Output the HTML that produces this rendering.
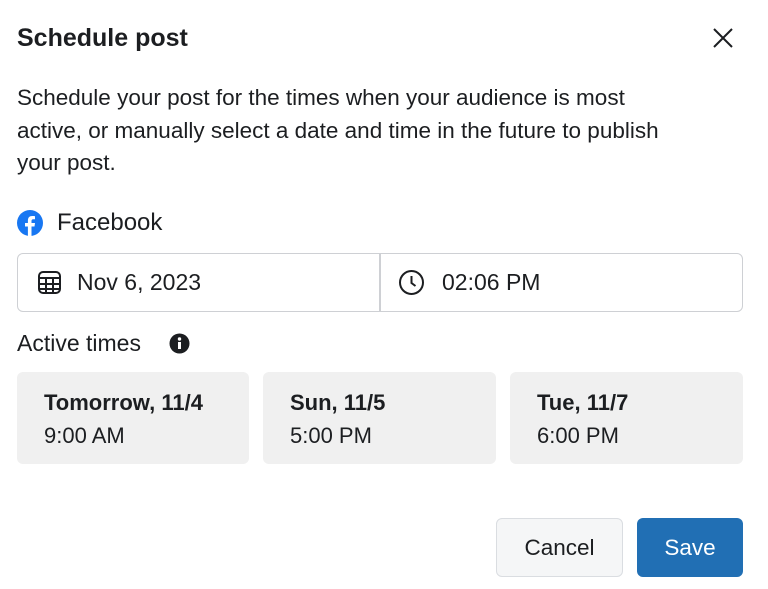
<!DOCTYPE html><html><head><style>
body{margin:0;width:768px;height:589px;background:#fff;font-family:"Liberation Sans",sans-serif;color:#1c1e21;position:relative;overflow:hidden}
.a{position:absolute}
</style></head><body>
<div class="a" style="left:17px;top:24px;font-size:25px;font-weight:bold">Schedule post</div>
<svg class="a" style="left:712px;top:27px" width="22" height="22" viewBox="0 0 22 22"><path d="M2 2L20 20M20 2L2 20" stroke="#1c1e21" stroke-width="2"/></svg>
<div class="a" style="left:17px;top:82px;width:672px;font-size:22.5px;line-height:32.5px;color:#1c1e21">Schedule your post for the times when your audience is most active, or manually select a date and time in the future to publish your post.</div>
<svg class="a" style="left:17px;top:210px" width="26" height="26" viewBox="0 0 26 26"><circle cx="13" cy="13" r="13" fill="#1877f2"/><path d="M14.5 26V16.5h3l.5-3.5h-3.5v-2c0-1 .4-1.8 1.8-1.8H18V6.2c-.5-.1-1.6-.2-2.8-.2-2.7 0-4.3 1.6-4.3 4.5V13H8v3.5h2.9V26z" fill="#fff"/></svg>
<div class="a" style="left:57px;top:209px;font-size:24px">Facebook</div>
<div class="a" style="left:17px;top:253px;width:724px;height:57px;border:1.5px solid #ced0d4;border-radius:6px"></div>
<div class="a" style="left:379px;top:254px;width:1.5px;height:57px;background:#ced0d4"></div>
<svg class="a" style="left:37px;top:270px" width="25" height="25" viewBox="0 0 25 25" fill="none" stroke="#1c1e21" stroke-width="2"><rect x="2" y="2" width="21" height="21" rx="4"/><path d="M2 8h21M2 14h21M2 19h21M9 8v15M16 8v15"/></svg>
<div class="a" style="left:77px;top:269px;font-size:23px">Nov 6, 2023</div>
<svg class="a" style="left:398px;top:269px" width="27" height="27" viewBox="0 0 27 27" fill="none" stroke="#1c1e21" stroke-width="2"><circle cx="13.5" cy="13.5" r="11.5"/><path d="M13.5 7v7l4 3"/></svg>
<div class="a" style="left:442px;top:269px;font-size:23px">02:06 PM</div>
<div class="a" style="left:17px;top:330px;font-size:23px">Active times</div>
<svg class="a" style="left:169px;top:333px" width="21" height="21" viewBox="0 0 21 21"><circle cx="10.5" cy="10.5" r="10" fill="#1c1e21"/><rect x="9" y="9" width="3" height="7" fill="#fff"/><circle cx="10.5" cy="6" r="1.7" fill="#fff"/></svg>
<div class="a" style="left:17px;top:372px;width:232px;height:92px;background:#f0f0f0;border-radius:6px"></div>
<div class="a" style="left:263px;top:372px;width:233px;height:92px;background:#f0f0f0;border-radius:6px"></div>
<div class="a" style="left:510px;top:372px;width:233px;height:92px;background:#f0f0f0;border-radius:6px"></div>
<div class="a" style="left:44px;top:386px;font-size:22px;font-weight:bold;line-height:33px">Tomorrow, 11/4<br><span style="font-weight:normal">9:00 AM</span></div>
<div class="a" style="left:290px;top:386px;font-size:22px;font-weight:bold;line-height:33px">Sun, 11/5<br><span style="font-weight:normal">5:00 PM</span></div>
<div class="a" style="left:537px;top:386px;font-size:22px;font-weight:bold;line-height:33px">Tue, 11/7<br><span style="font-weight:normal">6:00 PM</span></div>
<div class="a" style="left:496px;top:518px;width:125px;height:57px;background:#f5f6f7;border:1.5px solid #dadde1;border-radius:6px;font-size:22.5px;line-height:57px;text-align:center">Cancel</div>
<div class="a" style="left:637px;top:518px;width:106px;height:59px;background:#216fb4;border-radius:6px;font-size:22.5px;line-height:59px;text-align:center;color:#fff">Save</div>
</body></html>
